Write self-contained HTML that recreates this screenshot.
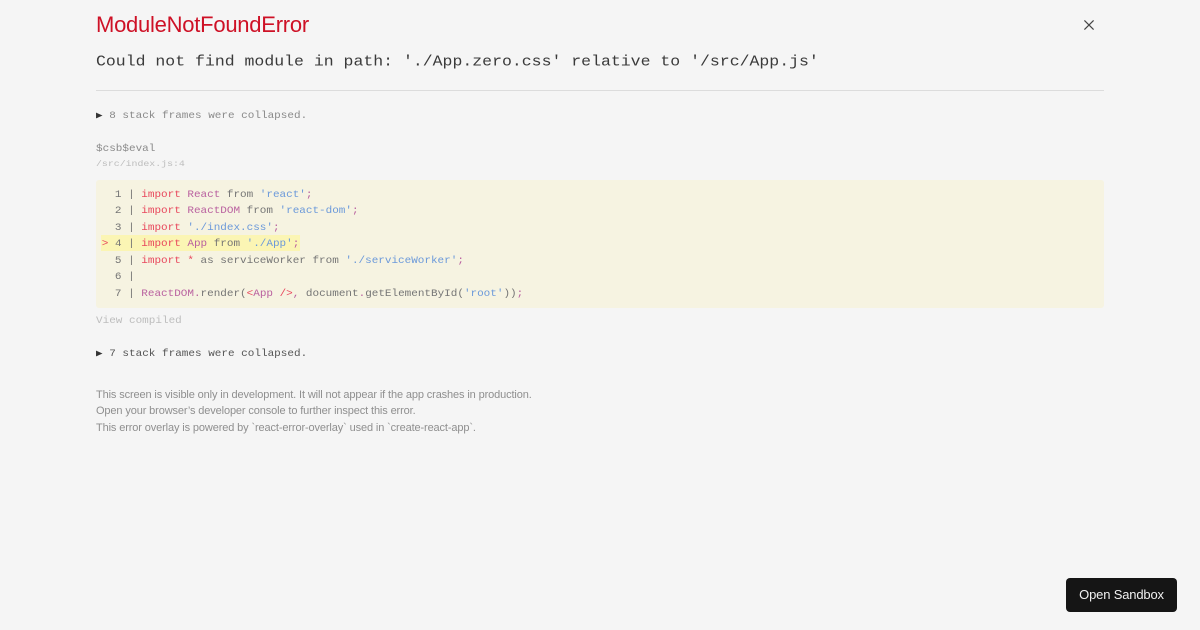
<!DOCTYPE html>
<html><head><meta charset="utf-8">
<style>
html,body{margin:0;padding:0;width:1200px;height:630px;overflow:hidden;background:#f5f5f5}
body{position:relative;font-family:"Liberation Sans",sans-serif}
.a{position:absolute;white-space:pre}
.m{font-family:"Liberation Mono",monospace;font-size:11px;line-height:16.5px;letter-spacing:-.003px}
.t{transform:scaleY(.88);transform-origin:0 60%}
.r{color:#e8475c}
.p{color:#b9609f}
.b{color:#6b99da}
code{font:inherit;position:absolute;left:0;white-space:pre;color:#757575;transform:scaleY(.88);transform-origin:0 60%}
</style></head><body>
<div class="a" style="left:96px;top:11px;font-size:22px;line-height:28px;color:#ce1126;letter-spacing:-.25px;transform:translateZ(0)">ModuleNotFoundError</div>
<svg class="a" style="left:1083px;top:19px" width="12" height="12" viewBox="0 0 12 12"><path d="M1.4 1.4L10.6 10.6M10.6 1.4L1.4 10.6" stroke="#444" stroke-width="1.2" fill="none"/></svg>
<div class="a t" style="left:96px;top:52px;font-family:'Liberation Mono',monospace;font-size:16.5px;line-height:19px;color:#3a3a3a">Could not find module in path: './App.zero.css' relative to '/src/App.js'</div>
<div class="a" style="left:96px;top:90px;width:1008px;height:1px;background:#dcdcdc"></div>
<div class="a m t" style="left:96px;top:108px;color:#8a8a8a"><span style="color:#333">▶</span> 8 stack frames were collapsed.</div>
<div class="a m t" style="left:96px;top:141px;color:#8a8a8a">$csb$eval</div>
<div class="a m t" style="left:96px;top:155.6px;font-size:9.9px;color:#bdbdbd">/src/index.js:4</div>
<div class="a" style="left:96px;top:180px;width:1008px;height:128px;background:#f6f3e1;border-radius:3px"></div>
<div class="a" style="left:101px;top:235px;width:199px;height:16px;background:#fbf5b4"></div>
<div class="a m" style="left:95.2px;top:186.7px;width:1000px;height:116px;letter-spacing:-.018px">
<code style="top:0">   1 | <span class="r">import</span> <span class="p">React</span> from <span class="b">'react'</span><span class="p">;</span></code>
<code style="top:16.5px">   2 | <span class="r">import</span> <span class="p">ReactDOM</span> from <span class="b">'react-dom'</span><span class="p">;</span></code>
<code style="top:33px">   3 | <span class="r">import</span> <span class="b">'./index.css'</span><span class="p">;</span></code>
<code style="top:49.5px"> <span class="r">&gt;</span> 4 | <span class="r">import</span> <span class="p">App</span> from <span class="b">'./App'</span><span class="p">;</span></code>
<code style="top:66px">   5 | <span class="r">import</span> <span class="r">*</span> as serviceWorker from <span class="b">'./serviceWorker'</span><span class="p">;</span></code>
<code style="top:82.5px">   6 |</code>
<code style="top:99px">   7 | <span class="p">ReactDOM</span><span class="p">.</span>render(<span class="r">&lt;</span><span class="p">App</span> <span class="r">/&gt;</span><span class="p">,</span> document<span class="p">.</span>getElementById(<span class="b">'root'</span>))<span class="p">;</span></code>
</div>
<div class="a m t" style="left:96px;top:313px;color:#bdbdbd">View compiled</div>
<div class="a m t" style="left:96px;top:346px;color:#555"><span style="color:#333">▶</span> 7 stack frames were collapsed.</div>
<div class="a" style="left:96px;top:386.6px;font-size:11px;line-height:16.5px;color:#8f8f8f;letter-spacing:-.124px">This screen is visible only in development. It will not appear if the app crashes in production.
Open your browser’s developer console to further inspect this error.
This error overlay is powered by `react-error-overlay` used in `create-react-app`.</div>
<div class="a" style="left:1066px;top:578px;width:111px;height:34px;background:#151515;border-radius:4px;color:#f0f0f0;font-size:13px;line-height:34px;text-align:center;letter-spacing:-.17px">Open Sandbox</div>
</body></html>
